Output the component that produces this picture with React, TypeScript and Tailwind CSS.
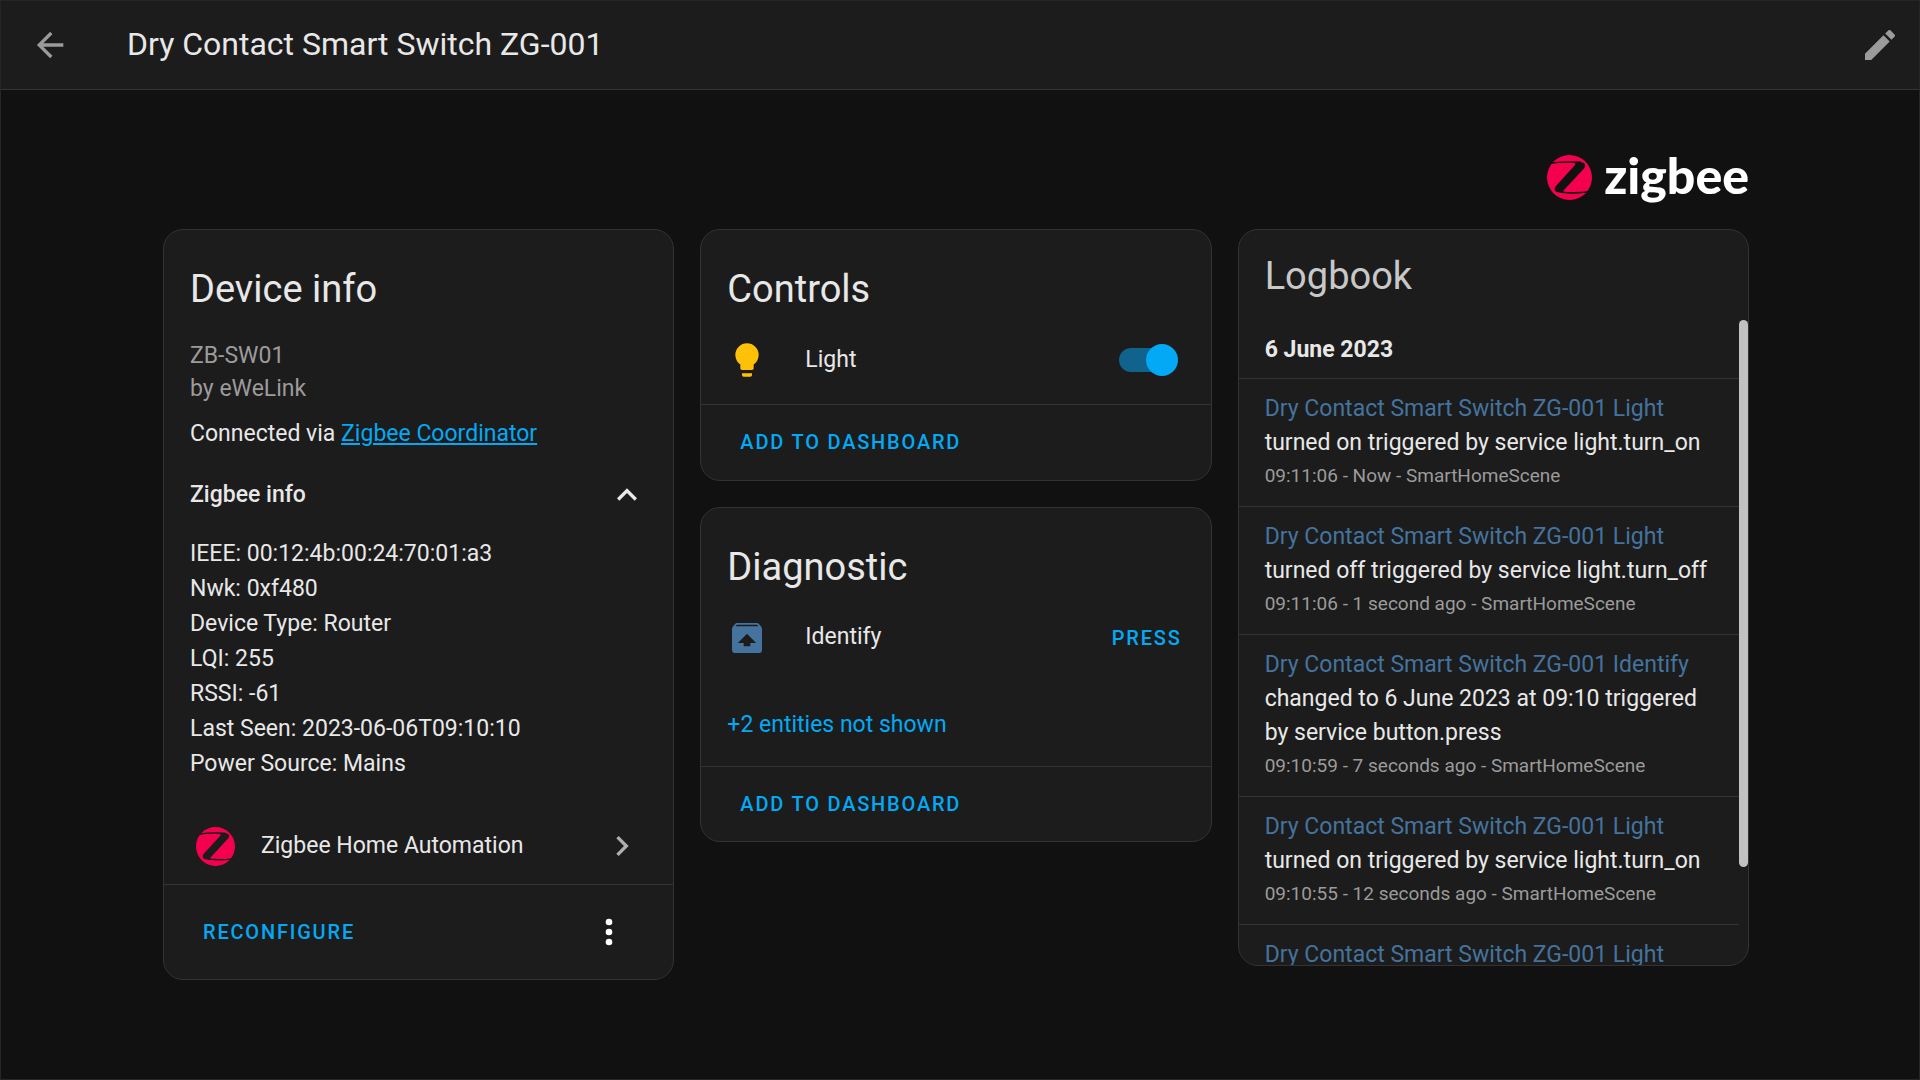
import { useState } from "react";

const logEntries = [
  { entity: "Light", message: "turned on triggered by service light.turn_on", when: "09:11:06 - Now" },
  { entity: "Light", message: "turned off triggered by service light.turn_off", when: "09:11:06 - 1 second ago" },
  { entity: "Identify", message: "changed to 6 June 2023 at 09:10 triggered by service button.press", when: "09:10:59 - 7 seconds ago" },
  { entity: "Light", message: "turned on triggered by service light.turn_on", when: "09:10:55 - 12 seconds ago" },
  { entity: "Light" },
];

const zigbeeInfo = [
  ["IEEE", "00:12:4b:00:24:70:01:a3"],
  ["Nwk", "0xf480"],
  ["Device Type", "Router"],
  ["LQI", "255"],
  ["RSSI", "-61"],
  ["Last Seen", "2023-06-06T09:10:10"],
  ["Power Source", "Mains"],
];

function Icon({ path, className }: { path: string; className: string }) {
  return (
    <svg viewBox="0 0 24 24" fill="currentColor" aria-hidden="true" className={className}>
      <path d={path} />
    </svg>
  );
}

function ZigbeeMark({ className, slash }: { className: string; slash: string }) {
  return (
    <svg viewBox="0 0 45 45" aria-hidden="true" className={className}>
      <circle cx="22.5" cy="22.5" r="22.5" fill="#f5004f" />
      <path
        d="M2.5 8.5 C12 6.8 24 6.8 34 7.3 M14 37 C22 38.2 34 38 43 36.5"
        fill="none"
        stroke={slash}
        strokeWidth="1.7"
      />
      <path
        d="M28.5 9.6 L27 6.9 C31 7 34 7.1 35.8 7.6 C38.6 8.4 39 11.2 37 13.4 L16 36 L18 38 C14 37.8 12 37.6 10 36.9 C7.2 35.8 7 33.2 9 31 Z"
        fill={slash}
      />
    </svg>
  );
}

function Card({ children, className = "" }: { children: React.ReactNode; className?: string }) {
  return (
    <section className={`overflow-hidden rounded-[20px] border border-[#333333] bg-[#1c1c1c] ${className}`}>
      {children}
    </section>
  );
}

function TextButton({ children }: { children: string }) {
  return (
    <button className="text-[20px] leading-8 font-medium tracking-[0.09em] text-[#03a9f4] uppercase">
      {children}
    </button>
  );
}

function DeviceInfo() {
  const [open, setOpen] = useState(true);

  return (
    <Card>
      <div className="px-[26px] pt-[35px] pb-[18px]">
        <h2 className="text-[38px] leading-12">Device info</h2>
        <div className="mt-[26px] leading-[33px] text-[#9b9b9b]">
          <p>ZB-SW01</p>
          <p>by eWeLink</p>
        </div>
        <p className="mt-3 leading-[33px]">
          Connected via{" "}
          <a href="#coordinator" className="text-[#03a9f4] underline">
            Zigbee Coordinator
          </a>
        </p>
        <button
          onClick={() => setOpen(!open)}
          aria-expanded={open}
          className="mt-[25px] flex w-full items-center justify-between leading-9 font-medium"
        >
          Zigbee info
          <Icon
            path="M7.41,15.41L12,10.83L16.59,15.41L18,14L12,8L6,14L7.41,15.41Z"
            className="size-10"
          />
        </button>
        {open && (
          <ul className="mt-[21px] leading-[35px]">
            {zigbeeInfo.map(([label, value]) => (
              <li key={label}>
                {label}: {value}
              </li>
            ))}
          </ul>
        )}
        <a href="#zha" className="mt-[45px] flex items-center pr-[5px]">
          <ZigbeeMark className="ml-[6px] size-[39px]" slash="#1c1c1c" />
          <span className="ml-[26px] flex-1">Zigbee Home Automation</span>
          <Icon
            path="M8.59,16.58L13.17,12L8.59,7.41L10,6L16,12L10,18L8.59,16.58Z"
            className="size-10 text-[#b0b0b0]"
          />
        </a>
      </div>
      <div className="flex items-center justify-between border-t border-[#333333] py-[27px] pr-11 pl-[39px]">
        <TextButton>Reconfigure</TextButton>
        <button aria-label="More options">
          <Icon
            path="M12,16A2,2 0 0,1 14,18A2,2 0 0,1 12,20A2,2 0 0,1 10,18A2,2 0 0,1 12,16M12,10A2,2 0 0,1 14,12A2,2 0 0,1 12,14A2,2 0 0,1 10,12A2,2 0 0,1 12,10M12,4A2,2 0 0,1 14,6A2,2 0 0,1 12,8A2,2 0 0,1 10,6A2,2 0 0,1 12,4Z"
            className="size-10 text-white"
          />
        </button>
      </div>
    </Card>
  );
}

function Controls() {
  return (
    <Card>
      <div className="px-[26px] pt-[35px] pb-6">
        <h2 className="text-[38px] leading-12">Controls</h2>
        <div className="mt-[27px] flex items-center pr-[7px]">
          <Icon
            path="M12,2A7,7 0 0,0 5,9C5,11.38 6.19,13.47 8,14.74V17A1,1 0 0,0 9,18H15A1,1 0 0,0 16,17V14.74C17.81,13.47 19,11.38 19,9A7,7 0 0,0 12,2M9,21A1,1 0 0,0 10,22H14A1,1 0 0,0 15,21V20H9V21Z"
            className="size-10 text-[#ffc107]"
          />
          <label htmlFor="light" className="ml-[38px] flex-1">
            Light
          </label>
          <span className="relative flex h-10 w-[59px] items-center">
            <input
              id="light"
              type="checkbox"
              role="switch"
              defaultChecked
              className="peer h-6 w-13 appearance-none rounded-full bg-[#5a5a5a] checked:bg-[#10638d]"
            />
            <span className="pointer-events-none absolute left-0 size-8 rounded-full bg-[#b0b0b0] peer-checked:left-[27px] peer-checked:bg-[#03a9f4]" />
          </span>
        </div>
      </div>
      <div className="border-t border-[#333333] px-[39px] py-5">
        <TextButton>Add to dashboard</TextButton>
      </div>
    </Card>
  );
}

function Diagnostic() {
  return (
    <Card>
      <div className="px-[26px] pt-[35px] pb-[21px]">
        <h2 className="text-[38px] leading-12">Diagnostic</h2>
        <div className="mt-[27px] flex items-center pr-[3px]">
          <Icon
            path="M20.54,5.23C20.83,5.57 21,6 21,6.5V19A2,2 0 0,1 19,21H5A2,2 0 0,1 3,19V6.5C3,6 3.17,5.57 3.46,5.23L4.84,3.55C5.12,3.21 5.53,3 6,3H18C18.47,3 18.88,3.21 19.15,3.55L20.54,5.23M5.12,5H18.87L17.93,4H5.93L5.12,5M12,9.5L6.5,15H10V17H14V15H17.5L12,9.5Z"
            className="size-10 text-[#44739e]"
          />
          <span className="ml-[38px] flex-1">Identify</span>
          <TextButton>Press</TextButton>
        </div>
        <button className="mt-[47px] block leading-10 text-[#03a9f4]">+2 entities not shown</button>
      </div>
      <div className="border-t border-[#333333] px-[39px] py-5">
        <TextButton>Add to dashboard</TextButton>
      </div>
    </Card>
  );
}

function Logbook() {
  return (
    <Card className="relative h-[737px]">
      <h2 className="px-[26px] pt-[22px] text-[38px] leading-12 text-[#c8c8c8]">Logbook</h2>
      <div className="mt-5 mr-[9px]">
        <h3 className="px-[26px] pt-3 pb-[10px] leading-9 font-bold">6 June 2023</h3>
        <ul>
          {logEntries.map((entry, i) => (
            <li key={i} className="border-t border-[#333333] px-[26px] pt-[13px] pb-[14px] leading-[34px]">
              <a href="#entity" className="text-[#44739e]">
                Dry Contact Smart Switch ZG-001 {entry.entity}
              </a>
              {entry.message && <p>{entry.message}</p>}
              {entry.when && (
                <p className="text-[19px] leading-8 text-[#9b9b9b]">{entry.when} - SmartHomeScene</p>
              )}
            </li>
          ))}
        </ul>
      </div>
      <div className="absolute top-[90px] right-0 h-[547px] w-[9px] rounded-full bg-[#c1c1c1]" />
    </Card>
  );
}

export default function App() {
  return (
    <div className="min-h-screen border border-[#262626] bg-[#111111] font-[Roboto,sans-serif] text-[23px] text-[#e8e8e8]">
      <header className="flex h-[89px] items-center border-b border-[#333333] bg-[#1c1c1c] pr-[19px] pl-[29px]">
        <button aria-label="Back">
          <Icon
            path="M20,11V13H8L13.5,18.5L12.08,19.92L4.16,12L12.08,4.08L13.5,5.5L8,11H20Z"
            className="size-10 text-[#9b9b9b]"
          />
        </button>
        <h1 className="ml-[57px] flex-1 pb-0.5 text-[32px]">Dry Contact Smart Switch ZG-001</h1>
        <button aria-label="Edit">
          <Icon
            path="M20.71,7.04C21.1,6.65 21.1,6 20.71,5.63L18.37,3.29C18,2.9 17.35,2.9 16.96,3.29L15.12,5.12L18.87,8.87M3,17.25V21H6.75L17.81,9.93L14.06,6.18L3,17.25Z"
            className="size-10 text-[#9b9b9b]"
          />
        </button>
      </header>

      <main className="pr-[170px] pl-[162px]">
        <div className="flex h-[139px] items-center justify-end gap-3 pt-[36px]">
          <ZigbeeMark className="size-[45px]" slash="#111111" />
          <span className="pb-1.5 font-[Lato,sans-serif] text-[50px] leading-none font-black text-white">zigbee</span>
        </div>
        <div className="grid grid-cols-3 items-start gap-[26px]">
          <DeviceInfo />
          <div className="flex flex-col gap-[26px]">
            <Controls />
            <Diagnostic />
          </div>
          <Logbook />
        </div>
      </main>
    </div>
  );
}
